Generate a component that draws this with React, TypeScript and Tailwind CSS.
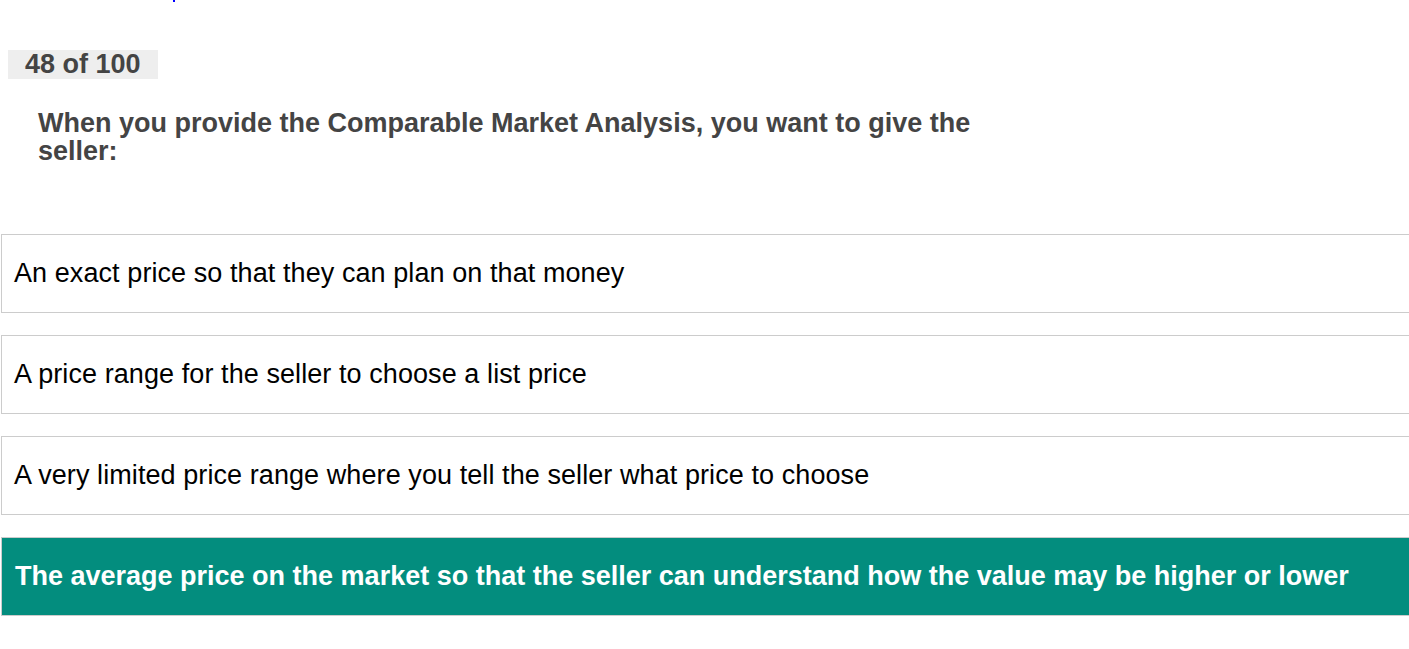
import React from "react";

const options = [
  "An exact price so that they can plan on that money",
  "A price range for the seller to choose a list price",
  "A very limited price range where you tell the seller what price to choose",
  "The average price on the market so that the seller can understand how the value may be higher or lower",
];

export default function App() {
  return (
    <div
      className="relative w-full h-[649px] overflow-hidden bg-white"
      style={{ fontFamily: '"Liberation Sans", Arial, sans-serif' }}
    >
      <div className="absolute left-[173px] top-0 w-[2px] h-[2px] bg-[#0000ff]" />
      <div className="pt-[50px] pl-[8px]">
        <div className="w-[150px] h-[29px] bg-[#eeeeee] text-[#444444] font-bold text-[27px] leading-[29px] pl-[17px] whitespace-nowrap">
          48 of 100
        </div>
      </div>
      <div className="pl-[38px] pt-[30px] w-[1000px] text-[#444444] font-bold text-[27px] leading-[28px]">
        When you provide the Comparable Market Analysis, you want to give the seller:
      </div>
      <div className="mt-[69px] pl-[1px] flex flex-col gap-[22px]">
        {options.map((o, i) => (
          <div
            key={i}
            className={
              i === 3
                ? "w-[1430px] h-[79px] border border-[#cccccc] bg-[#038d7e] text-white font-bold flex items-center pl-[13px] text-[27px] whitespace-nowrap"
                : "w-[1430px] h-[79px] border border-[#cccccc] bg-white text-black flex items-center pl-[12px] text-[27px] tracking-[0.08px] whitespace-nowrap"
            }
          >
            {o}
          </div>
        ))}
      </div>
    </div>
  );
}
